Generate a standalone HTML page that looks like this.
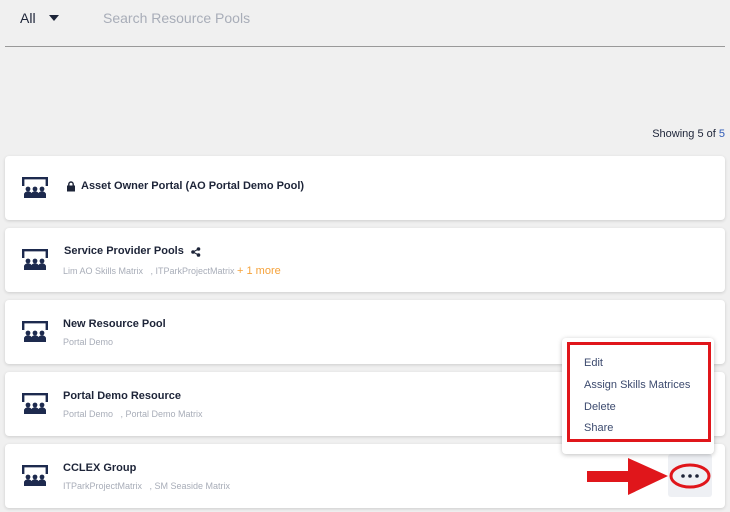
<!DOCTYPE html>
<html><head><style>
*{margin:0;padding:0;box-sizing:border-box}
body{width:730px;height:512px;background:#f0f0f0;font-family:"Liberation Sans",sans-serif;position:relative;overflow:hidden;color:#1d2438}
.abs{position:absolute}
.card{position:absolute;left:5px;width:720px;height:64px;background:#fff;border-radius:4px;box-shadow:0 1px 3px rgba(0,0,0,.15)}
.card svg{position:absolute;left:16px;top:20px}
.t{position:absolute;left:58px;font-size:11px;font-weight:bold;color:#1d2438}
.s{position:absolute;left:58px;font-size:9px;color:#a8adb8}
.menu{position:absolute;left:562px;top:338px;width:152px;height:116px;background:#fff;border-radius:4px;box-shadow:0 1px 5px rgba(0,0,0,.25)}
.menu .r{position:absolute;left:5px;top:4px;width:144px;height:100px;border:3px solid #e0161b}
.menu div.i{position:absolute;left:22px;font-size:11px;color:#3c4a6e}
</style></head><body>
<div class="abs" style="left:20px;top:10px;font-size:14px;color:#1d2438">All</div>
<div class="abs" style="left:49px;top:15px;width:0;height:0;border-left:5px solid transparent;border-right:5px solid transparent;border-top:6px solid #1d2438"></div>
<div class="abs" style="left:103px;top:10px;font-size:14px;color:#a8adb8">Search Resource Pools</div>
<div class="abs" style="left:5px;top:46px;width:720px;height:1px;background:#999"></div>
<div class="abs" style="right:5px;top:128px;font-size:11px;color:#1d2438">Showing 5 of <span style="color:#2f5bb7">5</span></div>

<svg width="0" height="0" style="position:absolute"><defs><g id="ic"><path d="M2.2 10V2.2h23.6V10" fill="none" stroke="#1d2a4e" stroke-width="2.4"/><circle cx="7" cy="13" r="2.4" fill="#1d2a4e"/><circle cx="14" cy="13" r="2.4" fill="#1d2a4e"/><circle cx="21" cy="13" r="2.4" fill="#1d2a4e"/><path d="M3 22v-3.5a4 3.2 0 0 1 8 0V22zM10 22v-3.5a4 3.2 0 0 1 8 0V22zM17 22v-3.5a4 3.2 0 0 1 8 0V22z" fill="#1d2a4e"/></g></defs></svg>

<div class="card" style="top:156px"><svg width="28" height="22"><use href="#ic"/></svg>
<svg width="10" height="11" style="left:61px;top:25px"><rect x="1" y="4.5" width="8" height="6" fill="#1d2438"/><path d="M2.8 5V3.2a2.2 2.2 0 0 1 4.4 0V5" fill="none" stroke="#1d2438" stroke-width="1.4"/></svg>
<div class="t" style="left:76px;top:24px">Asset Owner Portal (AO Portal Demo Pool)</div></div>

<div class="card" style="top:228px"><svg width="28" height="22"><use href="#ic"/></svg>
<div class="t" style="left:59px;top:17px">Service Provider Pools</div>
<svg width="10" height="10" style="left:186px;top:19px"><circle cx="7.5" cy="2" r="1.8" fill="#1d2438"/><circle cx="2" cy="5" r="1.8" fill="#1d2438"/><circle cx="7.5" cy="8" r="1.8" fill="#1d2438"/><path d="M7.5 2L2 5l5.5 3" stroke="#1d2438" fill="none"/></svg>
<div class="s" style="top:37px">Lim AO Skills Matrix &nbsp;&nbsp;, ITParkProjectMatrix <span style="color:#f5a23a;font-size:11px">+ 1 more</span></div></div>

<div class="card" style="top:300px"><svg width="28" height="22"><use href="#ic"/></svg>
<div class="t" style="top:18px">New Resource Pool</div>
<div class="s" style="top:37px">Portal Demo</div></div>

<div class="card" style="top:372px"><svg width="28" height="22"><use href="#ic"/></svg>
<div class="t" style="top:18px">Portal Demo Resource</div>
<div class="s" style="top:37px">Portal Demo &nbsp;&nbsp;, Portal Demo Matrix</div></div>

<div class="card" style="top:444px"><svg width="28" height="22"><use href="#ic"/></svg>
<div class="t" style="top:18px">CCLEX Group</div>
<div class="s" style="top:37px">ITParkProjectMatrix &nbsp;&nbsp;, SM Seaside Matrix</div>
<div style="position:absolute;left:663px;top:10px;width:44px;height:43px;background:#eef0f4;border-radius:3px"></div></div>

<div class="menu"><div class="r"></div>
<div class="i" style="top:19px">Edit</div>
<div class="i" style="top:41px">Assign Skills Matrices</div>
<div class="i" style="top:63px">Delete</div>
<div class="i" style="top:84px">Share</div></div>

<svg class="abs" style="left:580px;top:452px" width="150" height="50">
<rect x="7" y="19" width="44" height="11" fill="#e0161b"/>
<polygon points="48,6 88,24 48,43" fill="#e0161b"/>
<ellipse cx="110" cy="24" rx="19" ry="11" fill="none" stroke="#e0161b" stroke-width="3"/>
<circle cx="103" cy="24" r="1.8" fill="#1d2438"/><circle cx="110" cy="24" r="1.8" fill="#1d2438"/><circle cx="117" cy="24" r="1.8" fill="#1d2438"/>
</svg>
</body></html>
